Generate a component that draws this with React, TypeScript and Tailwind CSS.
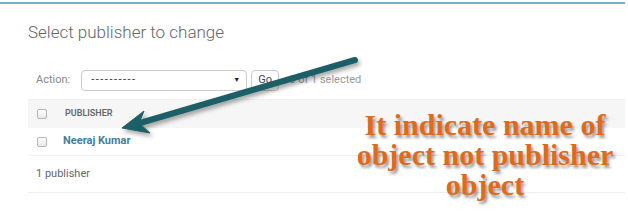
function Checkbox() {
  return (
    <span className="inline-block w-[10px] h-[10px] shrink-0 rounded-[2px] border border-[#b5b5b5] bg-gradient-to-b from-white to-[#e8e8e8]" />
  );
}

function Arrow() {
  return (
    <svg className="absolute left-0 top-0 pointer-events-none" width="628" height="222" viewBox="0 0 628 222">
      <defs>
        <filter id="shadow" x="-10%" y="-30%" width="130%" height="180%">
          <feDropShadow dx="2" dy="3" stdDeviation="2" floodColor="#000" floodOpacity="0.35" />
        </filter>
      </defs>
      <g filter="url(#shadow)" fill="#1d5f66" stroke="#1d5f66">
        <line x1="355" y1="60" x2="140" y2="123" strokeWidth="6" strokeLinecap="round" />
        <polygon points="122,128 144,111 139,123 150,133" strokeWidth="1" strokeLinejoin="round" />
      </g>
    </svg>
  );
}

export default function App() {
  return (
    <div className="relative w-[628px] h-[222px] overflow-hidden bg-white font-['Roboto',sans-serif]">
      <div className="mt-[2px] h-[2px] w-[625px] bg-[#79aec8]" />

      <div className="w-[625px] pl-[28px] pt-[18px]">
        <h1 className="text-[17px] leading-[20px] font-light text-[#666]">Select publisher to change</h1>

        <div className="mt-[28px] flex items-center h-[21px] pl-[8px]">
          <span className="text-[11px] text-[#888]">Action:</span>
          <div className="ml-[11px] w-[166px] h-[21px] flex items-center justify-between rounded-[4px] border border-[#ccc] pl-[9px] pr-[6px]">
            <span className="text-[11px] tracking-[1.5px] text-[#333]">----------</span>
            <span className="text-[7px] text-[#222]">▼</span>
          </div>
          <button className="ml-[4px] w-[28px] h-[21px] rounded-[4px] border border-[#ccc] bg-white text-[11px] text-[#444]">Go</button>
          <span className="ml-[10px] text-[11px] text-[#999]">0 of 1 selected</span>
        </div>

        <div className="mt-[8px]">
          <div className="h-[29px] flex items-center pl-[9px] bg-[#f6f6f6] border-t border-[#eee]">
            <Checkbox />
            <span className="ml-[18px] text-[9px] font-semibold uppercase text-[#666]">Publisher</span>
          </div>
          <div className="h-[28px] flex items-center pl-[9px] border-b border-[#eee]">
            <Checkbox />
            <a className="ml-[16px] text-[11px] font-bold text-[#447e9b]">Neeraj Kumar</a>
          </div>
          <div className="h-[37px] flex items-center pl-[8px] border-b border-[#eee] text-[11px] text-[#666]">
            1 publisher
          </div>
        </div>
      </div>

      <Arrow />

      <div className="absolute left-[335px] top-[110px] w-[300px] text-center font-['Liberation_Serif',serif] font-bold text-[30px] leading-[30px] text-[#e06a1a] [text-shadow:2px_3px_3px_rgba(0,0,0,0.4)]">
        It indicate name of
        <br />
        object not publisher
        <br />
        object
      </div>
    </div>
  );
}
